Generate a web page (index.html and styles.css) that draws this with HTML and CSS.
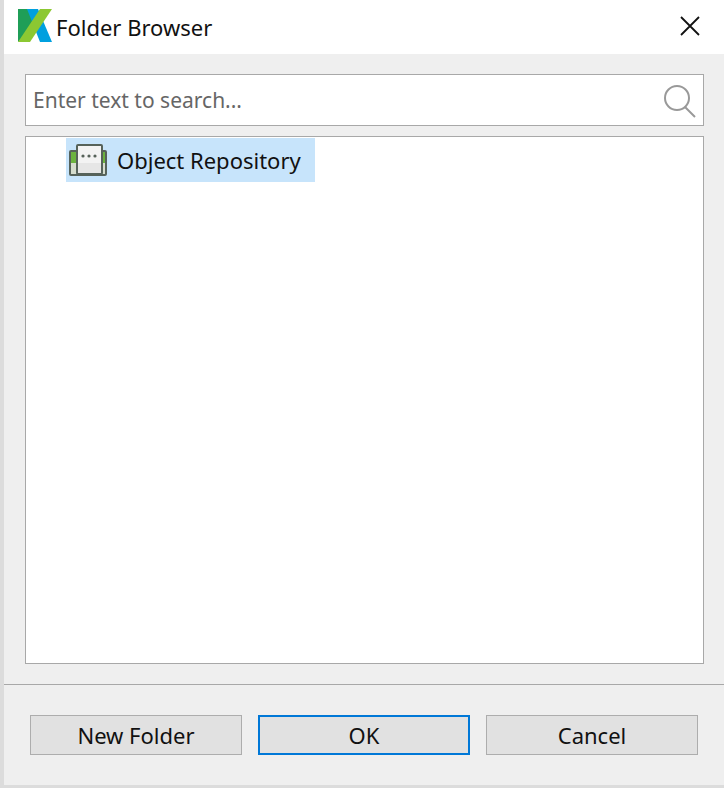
FILE: index.html
```html
<!DOCTYPE html>
<html lang="en">
<head>
    <meta charset="UTF-8">
    <title>Folder Browser</title>
    <link rel="stylesheet" href="styles.css">
</head>
<body>
    <div class="window">
        <!-- title bar -->
        <div class="title-bar">
            <svg class="app-logo" width="34" height="33" viewBox="0 0 34 33">
                <polygon points="0,0 12,0 24,16 14,20 0,33" fill="#1f9e57"/>
                <polygon points="9,0 20,0 34,33 22,33" fill="#00a0df"/>
                <polygon points="34,0 22,0 0,33 12,33" fill="#8cc832"/>
            </svg>
            <span class="title-text">Folder Browser</span>
            <svg class="close-icon" width="20" height="20" viewBox="0 0 20 20">
                <path d="M1 1 L19 19 M19 1 L1 19" stroke="#111" stroke-width="1.8" fill="none"/>
            </svg>
        </div>

        <div class="content">
            <!-- search -->
            <div class="search-box">
                <span class="search-text">Enter text to search...</span>
                <svg class="search-icon" width="34" height="34" viewBox="0 0 34 34">
                    <circle cx="14" cy="14" r="12" stroke="#999" stroke-width="2" fill="none"/>
                    <path d="M22 23 L32 33" stroke="#999" stroke-width="2" fill="none"/>
                </svg>
            </div>

            <!-- tree -->
            <div class="tree">
                <div class="tree-item">
                    <svg class="repo-icon" width="38" height="32" viewBox="0 0 38 32">
                        <rect x="1" y="7" width="36" height="24" rx="1" fill="#d5dccd" stroke="#56625a" stroke-width="2"/>
                        <rect x="2" y="8" width="6" height="11" fill="#6cb33f"/>
                        <rect x="30" y="8" width="6" height="11" fill="#6cb33f"/>
                        <rect x="8" y="1" width="25" height="29" rx="1" fill="#e6e6e6" stroke="#56625a" stroke-width="2"/>
                        <rect x="9" y="2" width="23" height="17" fill="#f3f3f3"/>
                        <circle cx="14" cy="12" r="1.6" fill="#56625a"/>
                        <circle cx="20" cy="12" r="1.6" fill="#56625a"/>
                        <circle cx="26" cy="12" r="1.6" fill="#56625a"/>
                    </svg>
                    <span class="tree-label">Object Repository</span>
                </div>
            </div>
        </div>

        <!-- buttons -->
        <div class="footer">
            <button class="btn">New Folder</button>
            <button class="btn btn-default">OK</button>
            <button class="btn">Cancel</button>
        </div>
    </div>
</body>
</html>
```

FILE: styles.css
```css
html, body {
    margin: 0;
    padding: 0;
    height: 788px;
    overflow: hidden;
    background: #dcdcdc;
    font-family: "Noto Sans", "Open Sans", sans-serif;
    color: #111;
}

.window {
    margin-left: 4px;
    height: 785px;
    background: #efefef;
    display: flex;
    flex-direction: column;
}

.title-bar {
    height: 54px;
    background: #fff;
    display: flex;
    align-items: center;
    padding: 0 24px 0 14px;
    flex-shrink: 0;
}

.app-logo {
    margin-right: 4px;
    margin-top: -4px;
}

.title-text {
    font-size: 22px;
    flex: 1;
    margin-top: -1px;
}

.close-icon {
    margin-top: -3px;
}

.content {
    flex: 1;
    display: flex;
    flex-direction: column;
    gap: 10px;
    padding: 20px 20px 20px 21px;
    border-bottom: 1px solid #a8a8a8;
}

.search-box {
    height: 50px;
    background: #fff;
    border: 1px solid #a8a8a8;
    display: flex;
    align-items: center;
    justify-content: space-between;
    padding: 0 6px 0 7px;
}

.search-text {
    font-size: 21px;
    color: #666;
}

.search-icon {
    margin-top: 2px;
}

.tree {
    flex: 1;
    background: #fff;
    border: 1px solid #a8a8a8;
    padding: 1px 0 0 40px;
}

.tree-item {
    display: inline-flex;
    align-items: center;
    gap: 10px;
    height: 44px;
    width: 249px;
    box-sizing: border-box;
    background: #c7e4fb;
    padding-left: 3px;
}

.tree-label {
    font-size: 22px;
}

.footer {
    height: 100px;
    flex-shrink: 0;
    display: flex;
    gap: 16px;
    padding: 30px 0 0 26px;
    box-sizing: border-box;
}

.btn {
    width: 212px;
    height: 40px;
    background: #e1e1e1;
    border: 1px solid #adadad;
    font-family: inherit;
    font-size: 22px;
    color: #111;
    padding: 0;
}

.btn-default {
    border: 2px solid #0078d7;
}
```
